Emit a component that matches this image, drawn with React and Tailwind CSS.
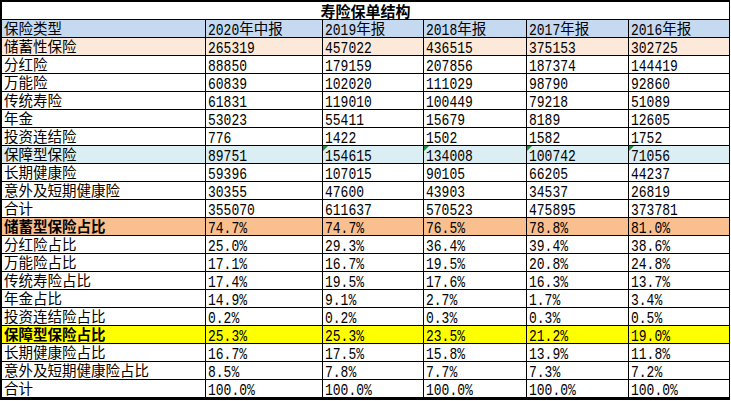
import React from "react";

const years = [
  { num: "2020", txt: "年中报" },
  { num: "2019", txt: "年报" },
  { num: "2018", txt: "年报" },
  { num: "2017", txt: "年报" },
  { num: "2016", txt: "年报" },
];

const rows = [
  { label: "储蓄性保险", bg: "bg-[#fde9d9]", vals: ["265319", "457022", "436515", "375153", "302725"] },
  { label: "分红险", vals: ["88850", "179159", "207856", "187374", "144419"] },
  { label: "万能险", vals: ["60839", "102020", "111029", "98790", "92860"] },
  { label: "传统寿险", vals: ["61831", "119010", "100449", "79218", "51089"] },
  { label: "年金", vals: ["53023", "55411", "15679", "8189", "12605"] },
  { label: "投资连结险", vals: ["776", "1422", "1502", "1582", "1752"] },
  { label: "保障型保险", bg: "bg-[#daeef3]", flag: true, vals: ["89751", "154615", "134008", "100742", "71056"] },
  { label: "长期健康险", vals: ["59396", "107015", "90105", "66205", "44237"] },
  { label: "意外及短期健康险", vals: ["30355", "47600", "43903", "34537", "26819"] },
  { label: "合计", vals: ["355070", "611637", "570523", "475895", "373781"] },
  { label: "储蓄型保险占比", bg: "bg-[#fabf8f]", bold: true, vals: ["74.7%", "74.7%", "76.5%", "78.8%", "81.0%"] },
  { label: "分红险占比", vals: ["25.0%", "29.3%", "36.4%", "39.4%", "38.6%"] },
  { label: "万能险占比", vals: ["17.1%", "16.7%", "19.5%", "20.8%", "24.8%"] },
  { label: "传统寿险占比", vals: ["17.4%", "19.5%", "17.6%", "16.3%", "13.7%"] },
  { label: "年金占比", vals: ["14.9%", "9.1%", "2.7%", "1.7%", "3.4%"] },
  { label: "投资连结险占比", vals: ["0.2%", "0.2%", "0.3%", "0.3%", "0.5%"] },
  { label: "保障型保险占比", bg: "bg-[#ffff00]", bold: true, vals: ["25.3%", "25.3%", "23.5%", "21.2%", "19.0%"] },
  { label: "长期健康险占比", vals: ["16.7%", "17.5%", "15.8%", "13.9%", "11.8%"] },
  { label: "意外及短期健康险占比", vals: ["8.5%", "7.8%", "7.7%", "7.3%", "7.2%"] },
  { label: "合计", vals: ["100.0%", "100.0%", "100.0%", "100.0%", "100.0%"] },
];

// CJK glyphs are full width, digits half width (like SimSun in Excel)
const cjk = "block leading-none mb-[2px] font-['Noto_Sans_CJK_SC',sans-serif] text-[14.5px]";
const mono =
  "block leading-[13px] translate-y-[1px] scale-y-[1.25] origin-[50%_76%] font-['Liberation_Mono','Noto_Sans_CJK_SC',monospace] text-[13px]";

function Cell({ bg, children, flag }) {
  return (
    <div
      className={`relative h-[18px] border-r border-b border-black pl-[2px] flex items-end whitespace-nowrap text-black ${bg || "bg-white"}`}
    >
      {flag && (
        <span className="absolute left-0 top-0 w-0 h-0 border-t-[5px] border-r-[5px] border-t-[#1e8c3a] border-r-transparent" />
      )}
      {children}
    </div>
  );
}

export default function App() {
  return (
    <div className="w-[731px] h-[401px] bg-white">
      <div className="w-[730px] border-l-2 border-t-2 border-b-2 border-black grid grid-cols-[204px_117px_101px_103px_102px_101px]">
        <div className="col-span-6 h-[18px] border-r border-b border-black flex items-center justify-center">
          <span className="font-['Noto_Sans_CJK_SC',sans-serif] text-[15px] font-bold leading-none text-black">
            寿险保单结构
          </span>
        </div>

        <Cell bg="bg-[#c5d9f1]">
          <span className={cjk}>保险类型</span>
        </Cell>
        {years.map((y) => (
          <Cell key={y.num} bg="bg-[#c5d9f1]">
            <span className={mono}>{y.num}</span>
            <span className={cjk}>{y.txt}</span>
          </Cell>
        ))}

        {rows.map((r, i) => (
          <React.Fragment key={i}>
            <Cell bg={r.bg}>
              <span className={`${cjk} ${r.bold ? "font-bold" : ""}`}>{r.label}</span>
            </Cell>
            {r.vals.map((v, j) => (
              <Cell key={j} bg={r.bg} flag={r.flag && j > 0}>
                <span className={mono}>{v}</span>
              </Cell>
            ))}
          </React.Fragment>
        ))}
      </div>
    </div>
  );
}
